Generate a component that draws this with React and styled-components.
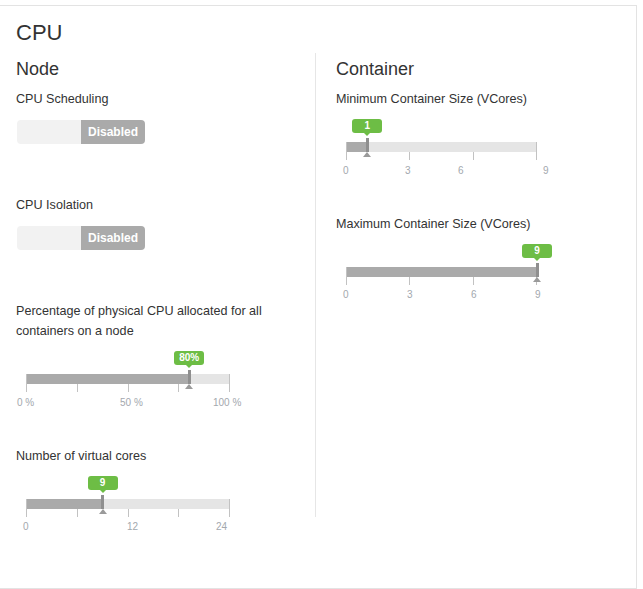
import React from "react";
import styled, { createGlobalStyle } from "styled-components";

const GlobalStyle = createGlobalStyle`
  html, body { margin: 0; padding: 0; background: #fff; }
  body { font-family: "Liberation Sans", Arial, sans-serif; color: #333; }
`;

const Page = styled.div`
  padding-top: 5px;
`;

const Card = styled.div`
  box-sizing: border-box;
  width: 638px;
  height: 584px;
  margin-left: -1px;
  border: 1px solid #e3e3e3;
  padding: 14px 0 0 16px;
  background: #fff;
`;

const Title = styled.h2`
  margin: 0;
  font-size: 22px;
  line-height: 26px;
  font-weight: 400;
  color: #333;
`;

const Columns = styled.div`
  display: flex;
  align-items: flex-start;
  margin-top: 7px;
`;

const Column = styled.div`
  box-sizing: border-box;
  width: ${(p) => p.$width};
  padding-left: ${(p) => p.$padLeft || 0}px;
  padding-right: ${(p) => p.$padRight || 0}px;
  flex-shrink: 0;
`;

const Divider = styled.div`
  width: 1px;
  height: 464px;
  background: #e6e6e6;
  flex-shrink: 0;
`;

const SectionHeading = styled.h3`
  margin: 5px 0 0;
  font-size: 18px;
  line-height: 22px;
  font-weight: 400;
  color: #333;
`;

const FieldLabel = styled.div`
  margin-top: ${(p) => p.$mt}px;
  font-size: 12.6px;
  line-height: 20px;
  color: #333;
`;

const Toggle = styled.div`
  display: flex;
  margin-top: 11px;
  margin-left: 1px;
  width: 128px;
  height: 24px;
  border-radius: 4px;
  overflow: hidden;
`;

const ToggleOff = styled.div`
  flex: 1;
  background: #f2f2f2;
`;

const ToggleOn = styled.div`
  flex: 1;
  background: #aaaaaa;
  color: #fff;
  font-weight: bold;
  font-size: 12px;
  display: flex;
  align-items: center;
  justify-content: center;
`;

const SliderBox = styled.div`
  position: relative;
  margin-top: 10px;
  margin-left: 10px;
  width: ${(p) => p.$w}px;
  padding-top: 23px;
`;

const Track = styled.div`
  position: relative;
  height: 10px;
  background: #e5e5e5;
  z-index: 1;
`;

const Fill = styled.div`
  height: 100%;
  background: #aaaaaa;
`;

const TickRow = styled.div`
  position: relative;
  height: 8px;
`;

const Tick = styled.div`
  position: absolute;
  width: 1px;
  background: #c2c2c2;
  top: ${(p) => (p.$edge ? -10 : 0)}px;
  height: ${(p) => (p.$edge ? 18 : 8)}px;
  z-index: ${(p) => (p.$edge ? 2 : 0)};
`;

const LabelRow = styled.div`
  position: relative;
  height: 12px;
  margin-top: 4.5px;
`;

const TickLabel = styled.span`
  position: absolute;
  top: 0;
  font-size: 10px;
  line-height: 12px;
  color: #a3a8ae;
  white-space: nowrap;
`;

const Tip = styled.div`
  position: absolute;
  top: 0;
  transform: translateX(-50%);
  box-sizing: border-box;
  min-width: 30px;
  height: 14px;
  padding: 0 4px;
  border-radius: 3px;
  background: #6dbd45;
  color: #fff;
  font-size: 10px;
  font-weight: bold;
  line-height: 14px;
  text-align: center;
  z-index: 3;
  &::after {
    content: "";
    position: absolute;
    left: 50%;
    top: 14px;
    margin-left: -3px;
    border-left: 3px solid transparent;
    border-right: 3px solid transparent;
    border-top: 3px solid #6dbd45;
  }
`;

const Handle = styled.div`
  position: absolute;
  top: 19px;
  width: 3px;
  height: 14px;
  margin-left: -1.5px;
  background: #8f8f8f;
  z-index: 3;
`;

const HandleArrow = styled.div`
  position: absolute;
  top: 33px;
  margin-left: -4px;
  width: 0;
  height: 0;
  border-left: 4px solid transparent;
  border-right: 4px solid transparent;
  border-bottom: 5px solid #9a9a9a;
  z-index: 3;
`;

function Slider({ width, frac, ticks, labels, tip }) {
  const pos = frac * width;
  return (
    <SliderBox $w={width}>
      <Tip style={{ left: pos }}>{tip}</Tip>
      <Handle style={{ left: pos }} />
      <Track>
        <Fill style={{ width: pos }} />
      </Track>
      <HandleArrow style={{ left: pos }} />
      <TickRow>
        {ticks.map((t, i) => (
          <Tick
            key={i}
            $edge={i === 0 || i === ticks.length - 1}
            style={{ left: Math.round(t * (width - 1)) }}
          />
        ))}
      </TickRow>
      <LabelRow>
        {labels.map((l) => (
          <TickLabel key={l.t} style={{ left: l.x }}>
            {l.t}
          </TickLabel>
        ))}
      </LabelRow>
    </SliderBox>
  );
}

function Switch() {
  return (
    <Toggle>
      <ToggleOff />
      <ToggleOn>Disabled</ToggleOn>
    </Toggle>
  );
}

const quarters = [0, 0.25, 0.5, 0.75, 1];
const thirds = [0, 1 / 3, 2 / 3, 1];

export default function App() {
  return (
    <Page>
      <GlobalStyle />
      <Card>
        <Title>CPU</Title>
        <Columns>
          <Column $width="299px" $padRight={20}>
            <SectionHeading>Node</SectionHeading>
            <FieldLabel $mt={9}>CPU Scheduling</FieldLabel>
            <Switch />
            <FieldLabel $mt={51}>CPU Isolation</FieldLabel>
            <Switch />
            <FieldLabel $mt={51}>
              Percentage of physical CPU allocated for all containers on a node
            </FieldLabel>
            <Slider
              width={204}
              frac={0.8}
              ticks={quarters}
              tip="80%"
              labels={[
                { t: "0 %", x: -9 },
                { t: "50 %", x: 94 },
                { t: "100 %", x: 187 },
              ]}
            />
            <FieldLabel $mt={37}>Number of virtual cores</FieldLabel>
            <Slider
              width={204}
              frac={9 / 24}
              ticks={quarters}
              tip="9"
              labels={[
                { t: "0", x: -3 },
                { t: "12", x: 101 },
                { t: "24", x: 190 },
              ]}
            />
          </Column>
          <Divider />
          <Column $width="300px" $padLeft={20}>
            <SectionHeading>Container</SectionHeading>
            <FieldLabel $mt={9}>Minimum Container Size (VCores)</FieldLabel>
            <Slider
              width={191}
              frac={1 / 9}
              ticks={thirds}
              tip="1"
              labels={[
                { t: "0", x: -3 },
                { t: "3", x: 59 },
                { t: "6", x: 112 },
                { t: "9", x: 197 },
              ]}
            />
            <FieldLabel $mt={37}>Maximum Container Size (VCores)</FieldLabel>
            <Slider
              width={191}
              frac={1}
              ticks={thirds}
              tip="9"
              labels={[
                { t: "0", x: -3 },
                { t: "3", x: 61 },
                { t: "6", x: 125 },
                { t: "9", x: 189 },
              ]}
            />
          </Column>
        </Columns>
      </Card>
    </Page>
  );
}
